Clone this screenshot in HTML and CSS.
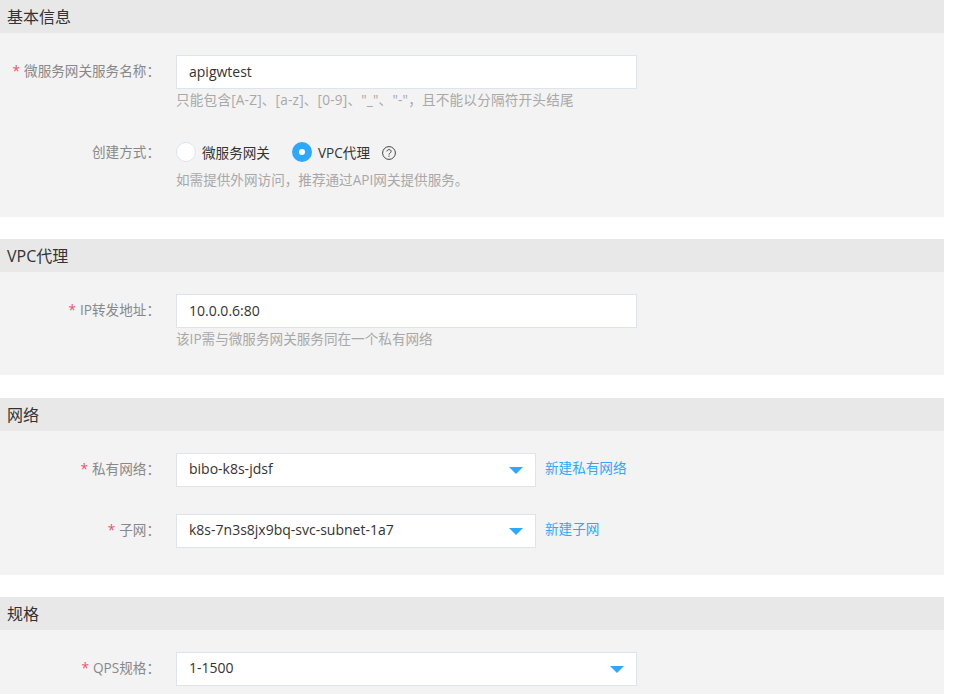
FILE: index.html
```html
<!DOCTYPE html>
<html lang="zh-CN">
<head>
<meta charset="utf-8">
<title>微服务网关</title>
<link rel="stylesheet" href="styles.css">
</head>
<body>
<form class="form">
  <section class="section section-basic">
    <h2 class="section-title">基本信息</h2>
    <div class="section-body">
      <div class="row">
        <label class="label"><span class="req">*</span>微服务网关服务名称：</label>
        <div class="field">
          <input class="input" type="text" value="apigwtest">
          <p class="hint hint-wide">只能包含[A-Z]、[a-z]、[0-9]、"_"、"-"，且不能以分隔符开头结尾</p>
        </div>
      </div>
      <div class="row row-radio">
        <label class="label">创建方式：</label>
        <div class="field">
          <div class="radios">
            <span class="radio"><i class="dot"></i>微服务网关</span>
            <span class="radio radio-on"><i class="dot"></i>VPC代理</span>
            <svg class="help" width="14" height="14" viewBox="0 0 14 14" aria-hidden="true"><circle cx="7" cy="7" r="6.4" fill="none" stroke="#444" stroke-width="1"/><path d="M4.9 5.4C5 4.2 5.9 3.6 7 3.6c1.2 0 2.1.7 2.1 1.8 0 1.6-2.1 1.6-2.1 3.2" fill="none" stroke="#444" stroke-width="1"/><rect x="6.5" y="9.6" width="1" height="1.2" fill="#444"/></svg>
          </div>
          <p class="hint">如需提供外网访问，推荐通过API网关提供服务。</p>
        </div>
      </div>
    </div>
  </section>
  <section class="section section-proxy">
    <h2 class="section-title">VPC代理</h2>
    <div class="section-body">
      <div class="row">
        <label class="label"><span class="req">*</span>IP转发地址：</label>
        <div class="field">
          <input class="input" type="text" value="10.0.0.6:80">
          <p class="hint">该IP需与微服务网关服务同在一个私有网络</p>
        </div>
      </div>
    </div>
  </section>
  <section class="section section-net">
    <h2 class="section-title">网络</h2>
    <div class="section-body">
      <div class="row">
        <label class="label"><span class="req">*</span>私有网络：</label>
        <div class="field field-inline">
          <div class="select select-short">bibo-k8s-jdsf<i class="caret"></i></div>
          <a class="link">新建私有网络</a>
        </div>
      </div>
      <div class="row">
        <label class="label"><span class="req">*</span>子网：</label>
        <div class="field field-inline">
          <div class="select select-short">k8s-7n3s8jx9bq-svc-subnet-1a7<i class="caret"></i></div>
          <a class="link">新建子网</a>
        </div>
      </div>
    </div>
  </section>
  <section class="section section-spec">
    <h2 class="section-title">规格</h2>
    <div class="section-body">
      <div class="row">
        <label class="label"><span class="req">*</span>QPS规格：</label>
        <div class="field">
          <div class="select">1-1500<i class="caret"></i></div>
        </div>
      </div>
    </div>
  </section>
</form>
</body>
</html>
```
FILE: styles.css
```css
* { box-sizing: border-box; }
html, body { margin: 0; padding: 0; background: #fff; overflow: hidden; }
body {
  height: 694px;
  font-family: "Open Sans", "Noto Sans CJK SC", sans-serif;
  font-size: 14px;
  color: #333;
}
.form { width: 944px; height: 694px; display: flex; flex-direction: column; }
.section { background: #f3f3f3; margin-bottom: 22px; flex: none; }
.section-proxy { margin-bottom: 23px; }
.section-spec { flex: 1; margin-bottom: 0; }
.section-spec .row { margin-bottom: 0; }
.section-basic .section-body { padding-bottom: 1px; }
.section-title {
  margin: 0;
  height: 33px;
  line-height: 34px;
  padding-left: 7px;
  background: #e8e8e8;
  font-size: 16px;
  font-weight: 400;
  color: #333;
}
.section-body { padding-top: 22px; display: flow-root; }
.row { display: flex; margin-bottom: 27px; }
.label {
  width: 176px;
  padding-right: 16px;
  line-height: 32px;
  font-size: 13.6px;
  text-align: right;
  color: #888;
  flex: none;
}
.req { color: #f0506e; margin-right: 4px; }
.field { width: 461px; }
.field-inline { display: flex; align-items: flex-start; gap: 9px; }
.input, .select {
  display: block;
  width: 461px;
  height: 34px;
  border: 1px solid #dde4ed;
  background: #fff;
  padding: 0 12px;
  font: inherit;
  line-height: 30px;
  color: #333;
  border-radius: 0;
  outline: none;
}
.input { padding-bottom: 2px; }
.select { position: relative; }
.select-short { width: 360px; flex: none; }
.caret {
  position: absolute;
  right: 12px;
  top: 13px;
  width: 0;
  height: 0;
  border-left: 7px solid transparent;
  border-right: 7px solid transparent;
  border-top: 7px solid #2da8ff;
}
.hint {
  margin: 2px 0 0;
  line-height: 18px;
  font-size: 13.6px;
  color: #a8a8a8;
}
.hint-wide { letter-spacing: .2px; }
.row-radio .hint { margin-top: 3px; }
.radios { display: flex; align-items: center; height: 32px; font-size: 13.6px; }
.radio { display: flex; align-items: center; margin-right: 22px; }
.radio-on { margin-right: 12px; }
.dot {
  width: 20px;
  height: 20px;
  margin-right: 6px;
  border-radius: 50%;
  border: 1px solid #dde4ed;
  background: #fff;
}
.radio-on .dot { border: 7px solid #2da8ff; }
.help { margin-top: 2px; }
.link { color: #2da8ff; font-size: 13.6px; white-space: nowrap; line-height: 30px; }
```
